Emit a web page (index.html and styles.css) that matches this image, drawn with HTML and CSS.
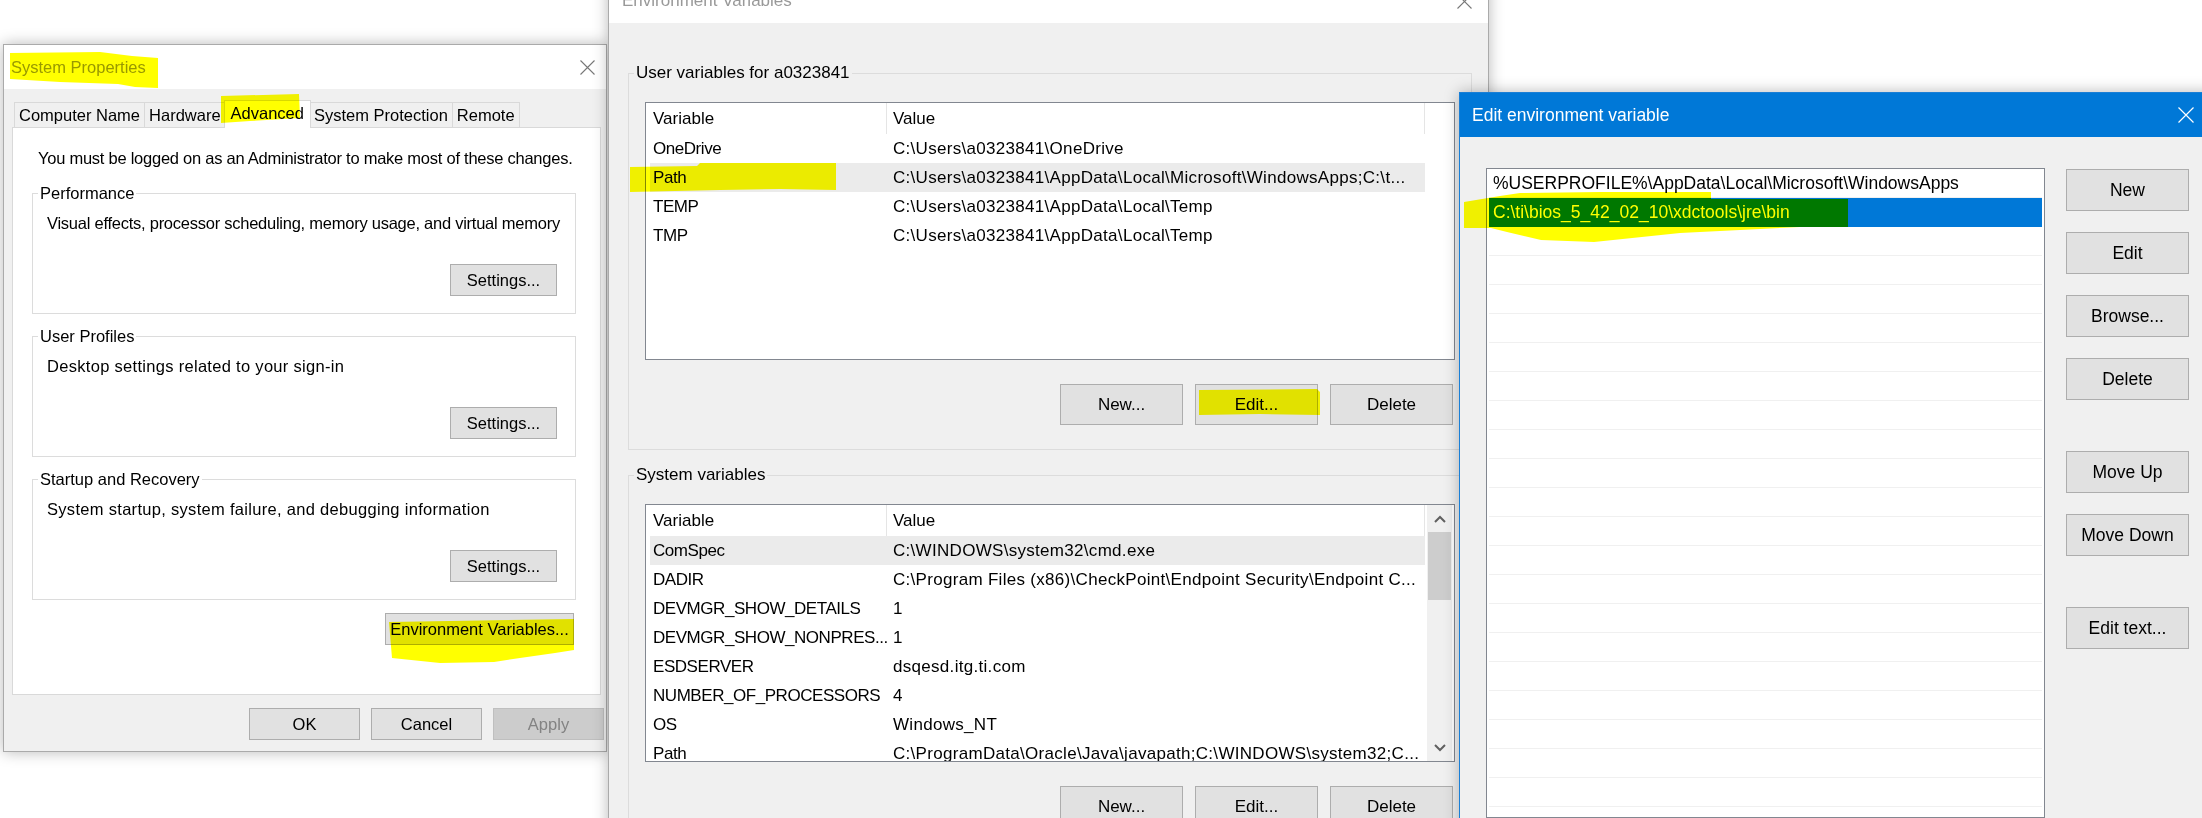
FILE: index.html
```html
<!DOCTYPE html>
<html lang="en">
<head>
    <meta charset="UTF-8">
    <title>Environment Variables</title>
    <link rel="stylesheet" href="styles.css">
</head>
<body>
<div class="desktop">

    <!-- System Properties -->
    <section class="window sysprops">
        <div class="titlebar">
            <span class="title">System Properties</span>
            <svg class="close" width="15" height="15" viewBox="0 0 15 15"><path d="M0.5 0.5 L14.5 14.5 M14.5 0.5 L0.5 14.5" stroke="#777" stroke-width="1.1" fill="none"/></svg>
        </div>
        <div class="sp-body">
            <div class="tabs">
                <span class="tab">Computer Name</span>
                <span class="tab">Hardware</span>
                <span class="tab active">Advanced</span>
                <span class="tab">System Protection</span>
                <span class="tab">Remote</span>
            </div>
            <div class="tab-panel">
                <p class="note tight">You must be logged on as an Administrator to make most of these changes.</p>

                <fieldset class="group">
                    <legend>Performance</legend>
                    <p class="desc tight">Visual effects, processor scheduling, memory usage, and virtual memory</p>
                    <div class="group-actions"><button class="btn btn-settings">Settings...</button></div>
                </fieldset>

                <fieldset class="group">
                    <legend>User Profiles</legend>
                    <p class="desc">Desktop settings related to your sign-in</p>
                    <div class="group-actions"><button class="btn btn-settings">Settings...</button></div>
                </fieldset>

                <fieldset class="group">
                    <legend>Startup and Recovery</legend>
                    <p class="desc">System startup, system failure, and debugging information</p>
                    <div class="group-actions"><button class="btn btn-settings">Settings...</button></div>
                </fieldset>

                <div class="env-row"><button class="btn btn-env">Environment Variables...</button></div>
            </div>
            <div class="dialog-buttons">
                <button class="btn btn-dlg">OK</button>
                <button class="btn btn-dlg">Cancel</button>
                <button class="btn btn-dlg disabled">Apply</button>
            </div>
        </div>
    </section>

    <!-- Environment Variables -->
    <section class="window envvars">
        <div class="titlebar">
            <span class="title">Environment Variables</span>
            <svg class="close" width="15" height="15" viewBox="0 0 15 15"><path d="M0.5 0.5 L14.5 14.5 M14.5 0.5 L0.5 14.5" stroke="#777" stroke-width="1.1" fill="none"/></svg>
        </div>
        <div class="ev-body">
            <fieldset class="ev-group">
                <legend>User variables for a0323841</legend>
                <div class="lv">
                    <div class="lv-table">
                        <div class="lv-head"><span>Variable</span><span>Value</span></div>
                        <div class="lv-row"><span>OneDrive</span><span>C:\Users\a0323841\OneDrive</span></div>
                        <div class="lv-row selected"><span>Path</span><span>C:\Users\a0323841\AppData\Local\Microsoft\WindowsApps;C:\t...</span></div>
                        <div class="lv-row"><span>TEMP</span><span>C:\Users\a0323841\AppData\Local\Temp</span></div>
                        <div class="lv-row"><span>TMP</span><span>C:\Users\a0323841\AppData\Local\Temp</span></div>
                    </div>
                </div>
                <div class="ev-actions">
                    <button class="btn btn-ev">New...</button>
                    <button class="btn btn-ev">Edit...</button>
                    <button class="btn btn-ev">Delete</button>
                </div>
            </fieldset>

            <fieldset class="ev-group">
                <legend>System variables</legend>
                <div class="lv">
                    <div class="lv-table">
                        <div class="lv-head"><span>Variable</span><span>Value</span></div>
                        <div class="lv-row selected"><span>ComSpec</span><span>C:\WINDOWS\system32\cmd.exe</span></div>
                        <div class="lv-row"><span>DADIR</span><span>C:\Program Files (x86)\CheckPoint\Endpoint Security\Endpoint C...</span></div>
                        <div class="lv-row"><span>DEVMGR_SHOW_DETAILS</span><span>1</span></div>
                        <div class="lv-row"><span>DEVMGR_SHOW_NONPRES...</span><span>1</span></div>
                        <div class="lv-row"><span>ESDSERVER</span><span>dsqesd.itg.ti.com</span></div>
                        <div class="lv-row"><span>NUMBER_OF_PROCESSORS</span><span>4</span></div>
                        <div class="lv-row"><span>OS</span><span>Windows_NT</span></div>
                        <div class="lv-row"><span>Path</span><span>C:\ProgramData\Oracle\Java\javapath;C:\WINDOWS\system32;C...</span></div>
                    </div>
                    <div class="lv-scroll">
                        <div class="arrow"><svg width="12" height="8" viewBox="0 0 12 8"><path d="M1 7 L6 2 L11 7" stroke="#606060" stroke-width="2" fill="none"/></svg></div>
                        <div class="thumb"></div>
                        <div class="track"></div>
                        <div class="arrow"><svg width="12" height="8" viewBox="0 0 12 8"><path d="M1 1 L6 6 L11 1" stroke="#606060" stroke-width="2" fill="none"/></svg></div>
                    </div>
                </div>
                <div class="ev-actions">
                    <button class="btn btn-ev">New...</button>
                    <button class="btn btn-ev">Edit...</button>
                    <button class="btn btn-ev">Delete</button>
                </div>
            </fieldset>
        </div>
    </section>

    <!-- Edit environment variable -->
    <section class="window editvar">
        <div class="titlebar">
            <span class="title">Edit environment variable</span>
            <svg class="close" width="16" height="16" viewBox="0 0 16 16"><path d="M0.5 0.5 L15.5 15.5 M15.5 0.5 L0.5 15.5" stroke="#fff" stroke-width="1.2" fill="none"/></svg>
        </div>
        <div class="ed-body">
            <div class="ed-list">
                <div class="ed-row">%USERPROFILE%\AppData\Local\Microsoft\WindowsApps</div>
                <div class="ed-row selected">C:\ti\bios_5_42_02_10\xdctools\jre\bin</div>
                <div class="ed-row"></div>
                <div class="ed-row"></div>
                <div class="ed-row"></div>
                <div class="ed-row"></div>
                <div class="ed-row"></div>
                <div class="ed-row"></div>
                <div class="ed-row"></div>
                <div class="ed-row"></div>
                <div class="ed-row"></div>
                <div class="ed-row"></div>
                <div class="ed-row"></div>
                <div class="ed-row"></div>
                <div class="ed-row"></div>
                <div class="ed-row"></div>
                <div class="ed-row"></div>
                <div class="ed-row"></div>
                <div class="ed-row"></div>
                <div class="ed-row"></div>
                <div class="ed-row"></div>
                <div class="ed-row"></div>
                <div class="ed-row"></div>
            </div>
            <div class="ed-buttons">
                <button class="btn btn-ed">New</button>
                <button class="btn btn-ed">Edit</button>
                <button class="btn btn-ed">Browse...</button>
                <button class="btn btn-ed">Delete</button>
                <button class="btn btn-ed spaced">Move Up</button>
                <button class="btn btn-ed">Move Down</button>
                <button class="btn btn-ed spaced">Edit text...</button>
            </div>
        </div>
    </section>

    <!-- highlighter marks drawn over the screenshot -->
    <svg class="marker" width="2202" height="818" viewBox="0 0 2202 818">
        <g fill="#ffff00">
            <path d="M10 53 L100 52 L132 56 L158 58 L158 88 L135 87 L118 84 L60 82 L10 79 Z"/>
            <path d="M221 96 L299 94 L300 118 L250 121 L221 123 Z"/>
            <path d="M389 622 L574 619 L574 650 L555 653 L520 658 L494 662 L440 663 L392 658 Z"/>
            <path d="M630 167 L697 166 L700 163 L836 163 L836 190 L780 189 L720 190 L630 192 Z"/>
            <path d="M1199 390 L1317 389 L1320 392 L1320 415 L1260 414 L1199 415 Z"/>
            <path d="M1464 202 L1500 196 L1520 193 L1600 192 L1711 192 L1711 199 L1848 199 L1848 227 L1800 227 L1680 233 L1594 242 L1541 240 L1507 232 L1491 228 L1464 228 Z"/>
        </g>
    </svg>
</div>
</body>
</html>
```

FILE: styles.css
```css
* {
    box-sizing: border-box;
}
body {
    margin: 0;
    background: #fff;
}
.desktop {
    position: relative;
    width: 2202px;
    height: 818px;
    overflow: hidden;
    background: #fff;
    font-family: "Liberation Sans", Arial, sans-serif;
    font-size: 16.5px;
    color: #000;
    isolation: isolate;
}
p {
    margin: 0;
}

/* windows */
.window {
    position: absolute;
    display: flex;
    flex-direction: column;
    background: #f0f0f0;
    border: 1px solid #aaaaaa;
    box-shadow: 0 0 14px rgba(0,0,0,0.28);
}
.titlebar {
    flex-shrink: 0;
    height: 44px;
    display: flex;
    align-items: center;
    justify-content: space-between;
    background: #fff;
    color: #999;
}
.btn {
    font: inherit;
    color: #000;
    background: #e1e1e1;
    border: 1px solid #adadad;
    padding: 0;
    white-space: nowrap;
}

/* System Properties */
.sysprops {
    left: 3px;
    top: 44px;
    width: 604px;
    z-index: 1;
}
.sysprops .titlebar {
    padding: 0 11px 0 7px;
}
.sp-body {
    padding: 11px 2px 11px 8px;
}
.tabs {
    display: flex;
    align-items: flex-end;
    height: 28px;
    margin-bottom: -1px;
    padding-left: 2px;
    position: relative;
    z-index: 1;
}
.tab {
    height: 25px;
    line-height: 24px;
    margin-bottom: 1px;
    padding: 0 4px;
    background: #f0f0f0;
    border: 1px solid #d9d9d9;
    border-bottom: none;
    white-space: nowrap;
}
.tab + .tab {
    border-left: none;
}
.tab.active {
    height: 28px;
    line-height: 25px;
    margin: 0 -2px;
    padding: 0 6px;
    background: #fff;
    border-left: 1px solid #d9d9d9;
    position: relative;
}
.tab.active + .tab {
    border-left: 1px solid #d9d9d9;
}
.tab-panel {
    width: 589px;
    height: 568px;
    background: #fff;
    border: 1px solid #d9d9d9;
    padding: 20px 24px 0 19px;
}
.note {
    line-height: 20px;
    padding-left: 6px;
    margin-bottom: 16px;
}
.note,
.desc {
    white-space: nowrap;
}
.group {
    margin: 0 0 13px;
    padding: 11px 18px 17px 14px;
    border: 1px solid #dcdcdc;
    min-width: 0;
}
.group legend {
    line-height: 18px;
    padding: 0 2px;
    margin-left: -9px;
}
.desc {
    line-height: 20px;
    letter-spacing: 0.3px;
}
.tight,
.desc.tight {
    letter-spacing: -0.25px;
}
.group-actions {
    display: flex;
    justify-content: flex-end;
    margin-top: 31px;
}
.btn-settings {
    width: 107px;
    height: 32px;
}
.env-row {
    display: flex;
    justify-content: flex-end;
    margin-top: 6px;
    padding-right: 2px;
}
.btn-env {
    width: 189px;
    height: 32px;
}
.dialog-buttons {
    display: flex;
    justify-content: flex-end;
    gap: 11px;
    margin-top: 13px;
}
.btn-dlg {
    width: 111px;
    height: 32px;
}
.btn.disabled {
    background: #cccccc;
    border-color: #bfbfbf;
    color: #838383;
}

/* Environment Variables */
.envvars {
    left: 608px;
    top: -22px;
    width: 881px;
    height: 860px;
    font-size: 17px;
    z-index: 2;
}
.envvars .titlebar {
    padding: 0 16px 0 13px;
}
.ev-body {
    padding: 41px 16px 0 19px;
}
.ev-group {
    margin: 0 0 16px;
    padding: 20px 16px 24px 16px;
    border: 1px solid #dcdcdc;
    min-width: 0;
}
.ev-group legend {
    line-height: 18px;
    padding: 0 2px;
    margin-left: -11px;
}
.lv {
    display: flex;
    height: 258px;
    background: #fff;
    border: 1px solid #828790;
    overflow: hidden;
}
.lv-table {
    width: 775px;
    margin-left: 4px;
    flex-shrink: 0;
}
.lv-head,
.lv-row {
    display: grid;
    grid-template-columns: 237px 538px;
    white-space: nowrap;
}
.lv-head {
    height: 31px;
    line-height: 31px;
}
.lv-head span {
    border-right: 1px solid #e5e5e5;
}
.lv-row {
    height: 29px;
    line-height: 29px;
}
.lv-row.selected {
    background: #ebebeb;
}
.lv-head span,
.lv-row span {
    padding-left: 6px;
}
.lv-head span:first-child,
.lv-row span:first-child {
    padding-left: 3px;
}
.lv-row span:first-child {
    letter-spacing: -0.45px;
}
.lv-row span + span {
    overflow: hidden;
    text-overflow: ellipsis;
    letter-spacing: 0.3px;
}
.lv-scroll {
    width: 25px;
    margin-left: 2px;
    display: flex;
    flex-direction: column;
    background: #f0f0f0;
}
.lv-scroll .arrow {
    height: 27px;
    display: flex;
    align-items: center;
    justify-content: center;
}
.lv-scroll .thumb {
    height: 68px;
    margin: 0 1px;
    background: #cdcdcd;
}
.lv-scroll .track {
    flex: 1;
}
.ev-actions {
    display: flex;
    justify-content: flex-end;
    gap: 12px;
    margin-top: 24px;
    padding-right: 2px;
}
.btn-ev {
    width: 123px;
    height: 41px;
}

/* Edit environment variable */
.editvar {
    left: 1459px;
    top: 92px;
    width: 760px;
    height: 740px;
    font-size: 17.5px;
    border-color: #1a7fd6;
    z-index: 3;
}
.editvar .titlebar {
    height: 44px;
    padding: 0 24px 0 12px;
    background: #0078d7;
    color: #fff;
}
.ed-body {
    display: flex;
    gap: 21px;
    padding: 31px 0 0 26px;
}
.ed-list {
    width: 559px;
    height: 650px;
    background: #fff;
    border: 1px solid #828790;
    overflow: hidden;
}
.ed-row {
    height: 29px;
    line-height: 28px;
    margin: 0 2px;
    padding-left: 4px;
    border-bottom: 1px solid #f0f0f0;
    white-space: nowrap;
}
.ed-row.selected {
    background: #0078d7;
    border-bottom-color: #0078d7;
    color: #fff;
}
.ed-buttons {
    display: flex;
    flex-direction: column;
    gap: 21px;
    padding-top: 1px;
}
.btn-ed {
    width: 123px;
    height: 42px;
}
.btn-ed.spaced {
    margin-top: 30px;
}

/* yellow highlighter */
.marker {
    position: absolute;
    left: 0;
    top: 0;
    z-index: 4;
    pointer-events: none;
    mix-blend-mode: multiply;
}
```
